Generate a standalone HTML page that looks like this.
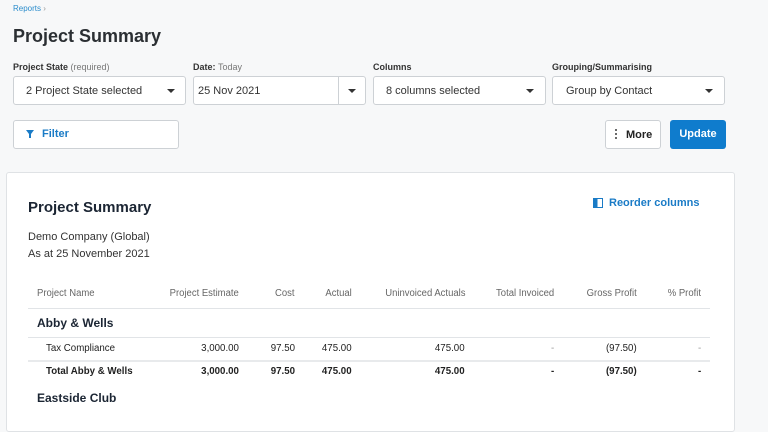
<!DOCTYPE html>
<html><head><meta charset="utf-8"><style>
*{box-sizing:border-box;margin:0;padding:0}
body{width:768px;height:412px;overflow:hidden;background:#f7f8f9;font-family:"Liberation Sans",sans-serif;color:#1e2a36;position:relative}
.a{position:absolute;white-space:nowrap}
.lbl{font-size:9px;font-weight:bold;color:#333;top:62px}
.lbl span{font-weight:normal;color:#777}
.box{position:absolute;top:76px;height:29px;background:#fff;border:1px solid #cdd1d5;border-radius:3px;font-size:11px;color:#333;line-height:28px}
.car{position:absolute;top:12px;width:0;height:0;border-left:4px solid transparent;border-right:4px solid transparent;border-top:4px solid #333}
.card{position:absolute;left:6px;top:172px;width:729px;height:260px;background:#fff;border:1px solid #dfe2e5;border-radius:3px}
.h{font-size:10px;color:#666;top:288px;transform:scaleX(.95);transform-origin:right}
.r{text-align:right}
.c{font-size:10px;color:#222;transform:scaleX(.97)}
.line{position:absolute;left:28px;width:682px;height:1px;background:#e1e4e7}
</style></head><body>
<div class="a" style="left:13px;top:4px;font-size:8px;color:#2a8ccc">Reports <span style="color:#999">›</span></div>
<div class="a" style="left:13px;top:26px;font-size:18px;font-weight:bold;color:#2b2f33">Project Summary</div>

<div class="a lbl" style="left:13px">Project State <span>(required)</span></div>
<div class="a lbl" style="left:193px">Date: <span>Today</span></div>
<div class="a lbl" style="left:373px">Columns</div>
<div class="a lbl" style="left:552px">Grouping/Summarising</div>

<div class="box" style="left:13px;width:173px;padding-left:12px">2 Project State selected<div class="car" style="left:153px"></div></div>
<div class="box" style="left:193px;width:173px;padding-left:4px">25 Nov 2021<div style="position:absolute;left:144px;top:0;width:1px;height:27px;background:#cdd1d5"></div><div class="car" style="left:154px"></div></div>
<div class="box" style="left:373px;width:173px;padding-left:12px">8 columns selected<div class="car" style="left:152px"></div></div>
<div class="box" style="left:552px;width:173px;padding-left:13px">Group by Contact<div class="car" style="left:152px"></div></div>

<div class="a" style="left:13px;top:120px;width:166px;height:29px;background:#fff;border:1px solid #cdd1d5;border-radius:3px"></div>
<svg class="a" style="left:26px;top:130px" width="8" height="8"><path d="M0 0H8L5 4V8H3V4Z" fill="#1a7bc6"/></svg>
<div class="a" style="left:42px;top:128px;font-size:11px;font-weight:bold;color:#1a7bc6">Filter</div>

<div class="a" style="left:605px;top:120px;width:56px;height:29px;background:#fff;border:1px solid #cdd1d5;border-radius:3px;font-size:11px;font-weight:bold;line-height:28px;padding-left:20px;color:#222">More</div>
<div class="a" style="left:615px;top:128px;width:2px;height:11px;background:radial-gradient(circle,#555 45%,transparent 50%) 0 0/2px 4px repeat-y"></div>
<div class="a" style="left:670px;top:120px;width:56px;height:29px;background:#0f7ccd;border-radius:3px;font-size:11px;font-weight:bold;line-height:29px;text-align:center;color:#fff">Update</div>

<div class="card"></div>
<div class="a" style="left:28px;top:199px;font-size:15px;font-weight:bold;color:#1b2533">Project Summary</div>
<div class="a" style="left:593px;top:198px;width:10px;height:10px;border:1.5px solid #1a7bc6;background:linear-gradient(90deg,#1a7bc6 45%,transparent 45%)"></div>
<div class="a" style="left:609px;top:197px;font-size:11px;font-weight:bold;color:#1a7bc6">Reorder columns</div>
<div class="a" style="left:28px;top:231px;font-size:11px;color:#333">Demo Company (Global)</div>
<div class="a" style="left:28px;top:248px;font-size:11px;color:#333">As at 25 November 2021</div>

<div class="a h" style="left:37px;transform-origin:left">Project Name</div>
<div class="a h r" style="right:529px">Project Estimate</div>
<div class="a h r" style="right:473px">Cost</div>
<div class="a h r" style="right:416px">Actual</div>
<div class="a h r" style="right:303px">Uninvoiced Actuals</div>
<div class="a h r" style="right:214px">Total Invoiced</div>
<div class="a h r" style="right:131px">Gross Profit</div>
<div class="a h r" style="right:67px">% Profit</div>
<div class="line" style="top:308px"></div>
<div class="a" style="left:37px;top:316px;font-size:12px;font-weight:bold;color:#1b2533">Abby &amp; Wells</div>
<div class="line" style="top:337px"></div>
<div class="a c" style="left:46px;top:343px;transform-origin:left">Tax Compliance</div>
<div class="a c" style="right:529px;top:343px;transform-origin:right">3,000.00</div>
<div class="a c" style="right:473px;top:343px;transform-origin:right">97.50</div>
<div class="a c" style="right:416px;top:343px;transform-origin:right">475.00</div>
<div class="a c" style="right:303px;top:343px;transform-origin:right">475.00</div>
<div class="a c" style="right:214px;top:343px;color:#999">-</div>
<div class="a c" style="right:131px;top:343px;transform-origin:right">(97.50)</div>
<div class="a c" style="right:67px;top:343px;color:#999">-</div>
<div class="line" style="top:360px;height:2px;background:#e8eaec"></div>
<div style="font-weight:bold">
<div class="a c" style="left:46px;top:366px;transform-origin:left">Total Abby &amp; Wells</div>
<div class="a c" style="right:529px;top:366px;transform-origin:right">3,000.00</div>
<div class="a c" style="right:473px;top:366px;transform-origin:right">97.50</div>
<div class="a c" style="right:416px;top:366px;transform-origin:right">475.00</div>
<div class="a c" style="right:303px;top:366px;transform-origin:right">475.00</div>
<div class="a c" style="right:214px;top:366px">-</div>
<div class="a c" style="right:131px;top:366px;transform-origin:right">(97.50)</div>
<div class="a c" style="right:67px;top:366px">-</div>
</div>
<div class="a" style="left:37px;top:391px;font-size:12px;font-weight:bold;color:#1b2533">Eastside Club</div>
</body></html>
